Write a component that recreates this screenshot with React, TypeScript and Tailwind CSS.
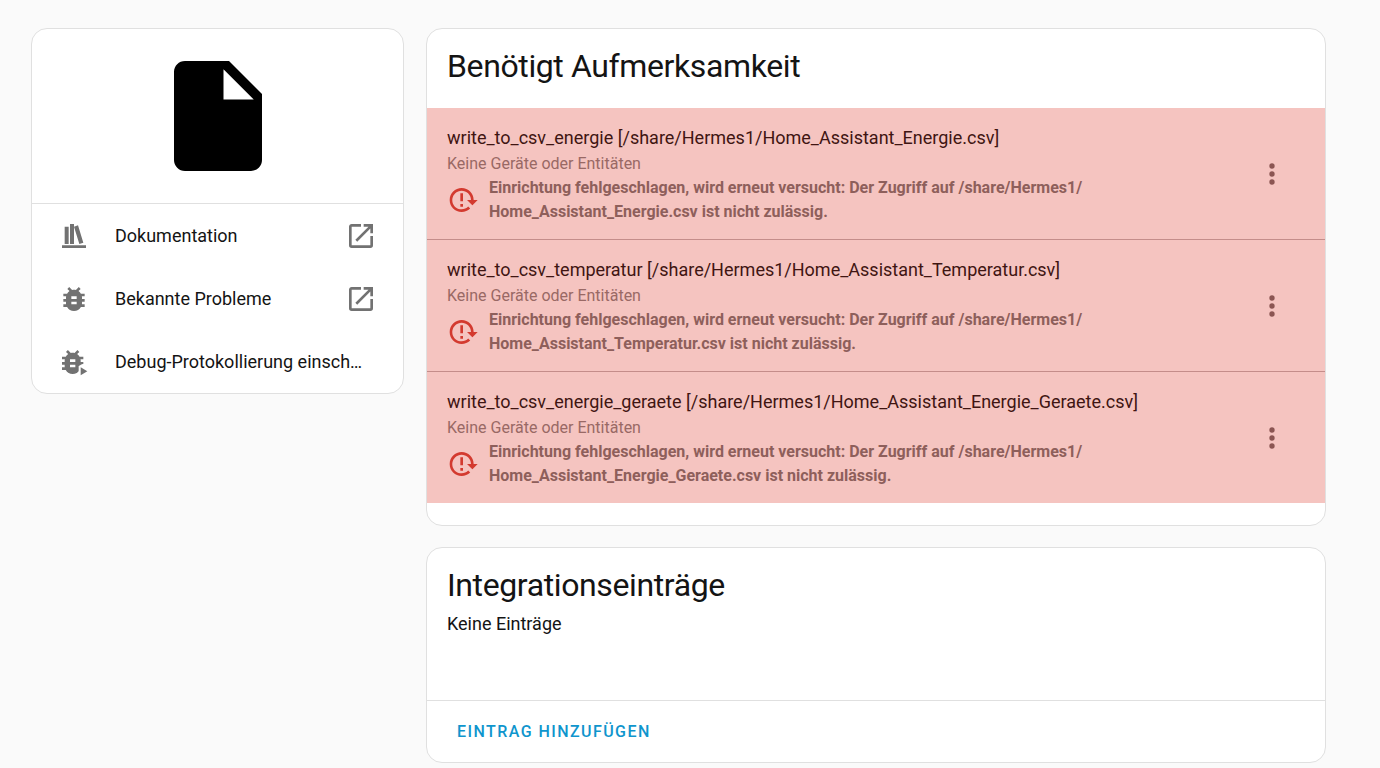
import { Fragment, type ReactNode } from 'react'

const mdiFile =
  'M13,9V3.5L18.5,9M6,2C4.89,2 4,2.89 4,4V20A2,2 0 0,0 6,22H18A2,2 0 0,0 20,20V8L14,2H6Z'
const mdiBookshelf =
  'M9 3V18H12V3H9M12 5L16 18L19 17L15 4L12 5M5 5V18H8V5H5M3 19V21H21V19H3Z'
const mdiBug =
  'M14,12H10V10H14M14,16H10V14H14M20,8H17.19C16.74,7.22 16.12,6.55 15.37,6.04L17,4.41L15.59,3L13.42,5.17C12.96,5.06 12.5,5 12,5C11.5,5 11.04,5.06 10.59,5.17L8.41,3L7,4.41L8.62,6.04C7.88,6.55 7.26,7.22 6.81,8H4V10H6.09C6.04,10.33 6,10.66 6,11V12H4V14H6V15C6,15.34 6.04,15.67 6.09,16H4V18H6.81C7.85,19.79 9.78,21 12,21C14.22,21 16.15,19.79 17.19,18H20V16H17.91C17.96,15.67 18,15.34 18,15V14H20V12H18V11C18,10.66 17.96,10.33 17.91,10H20V8Z'
const mdiOpenInNew =
  'M14,3V5H17.59L7.76,14.83L9.17,16.24L19,6.41V10H21V3M19,19H5V5H12V3H5C3.89,3 3,3.9 3,5V19A2,2 0 0,0 5,21H19A2,2 0 0,0 21,19V12H19V19Z'
const mdiReloadAlert =
  'M2 12C2 16.97 6.03 21 11 21C13.39 21 15.68 20.06 17.4 18.4L15.9 16.9C14.63 18.25 12.86 19 11 19C4.76 19 1.64 11.46 6.05 7.05C10.46 2.64 18 5.77 18 12H15L19 16H19.1L23 12H20C20 7.03 15.97 3 11 3C6.03 3 2 7.03 2 12M10 15H12V17H10V15M10 7H12V13H10V7'
const mdiDotsVertical =
  'M12,16A2,2 0 0,1 14,18A2,2 0 0,1 12,20A2,2 0 0,1 10,18A2,2 0 0,1 12,16M12,10A2,2 0 0,1 14,12A2,2 0 0,1 12,14A2,2 0 0,1 10,12A2,2 0 0,1 12,10M12,4A2,2 0 0,1 14,6A2,2 0 0,1 12,8A2,2 0 0,1 10,6A2,2 0 0,1 12,4Z'

const entries = [
  { title: 'write_to_csv_energie', path: '/share/Hermes1/Home_Assistant_Energie.csv' },
  { title: 'write_to_csv_temperatur', path: '/share/Hermes1/Home_Assistant_Temperatur.csv' },
  { title: 'write_to_csv_energie_geraete', path: '/share/Hermes1/Home_Assistant_Energie_Geraete.csv' },
]

function Icon({ path, className = 'size-8' }: { path: string; className?: string }) {
  return (
    <svg viewBox="0 0 24 24" fill="currentColor" aria-hidden="true" className={`shrink-0 ${className}`}>
      <path d={path} />
    </svg>
  )
}

function BugPlayIcon() {
  return (
    <svg viewBox="0 0 24 24" fill="currentColor" aria-hidden="true" className="size-8 shrink-0">
      <clipPath id="bug-body">
        <path d="M0 0H24V13.5H18.5L15.5 15V21.5H0Z" />
      </clipPath>
      <g clipPath="url(#bug-body)">
        <path d={mdiBug} transform="translate(-1 0)" />
      </g>
      <path d="M17 16V22L22 19Z" />
    </svg>
  )
}

function Card({ children }: { children: ReactNode }) {
  return (
    <section className="overflow-hidden rounded-2xl border border-[#e0e0e0] bg-white">{children}</section>
  )
}

function LinkRow({ icon, label }: { icon: string; label: string }) {
  return (
    <a href="#" className="flex h-[63px] items-center px-[26px]">
      <Icon path={icon} className="mr-[25px] size-8 text-[#727272]" />
      <span className="min-w-0 flex-1 truncate">{label}</span>
      <Icon path={mdiOpenInNew} className="size-8 text-[#727272]" />
    </a>
  )
}

// long paths may wrap after any slash
function BreakablePath({ path }: { path: string }) {
  return path.split('/').map((part, i) => (
    <Fragment key={i}>
      {i > 0 && '/'}
      {i > 1 && <wbr />}
      {part}
    </Fragment>
  ))
}

function EntryRow({ title, path }: { title: string; path: string }) {
  return (
    <li className="flex items-center border-b border-[#c48d8a] bg-[#f5c4c0] pt-4 pr-[21px] pb-[15px] pl-5 last:border-b-0">
      <div className="min-w-0 flex-1">
        <p className="text-[18px] leading-7 text-[#3f1512]">
          {title} [{path}]
        </p>
        <p className="text-[16px] leading-6 text-[#996965]">Keine Geräte oder Entitäten</p>
        <div className="flex items-center gap-[10px]">
          <Icon path={mdiReloadAlert} className="size-8 text-[#d33a2f]" />
          <p className="text-[16px] leading-6 font-bold text-[#8e5f5b]">
            Einrichtung fehlgeschlagen, wird erneut versucht: Der Zugriff auf <BreakablePath path={path} /> ist
            nicht zulässig.
          </p>
        </div>
      </div>
      <button type="button" aria-label="Menü" className="flex size-16 items-center justify-center text-[#8b5552]">
        <Icon path={mdiDotsVertical} />
      </button>
    </li>
  )
}

export default function App() {
  return (
    <div className="min-h-screen bg-[#fafafa] font-['Roboto',sans-serif] text-[18px] text-[#141414]">
      <main className="flex items-start gap-[22px] pt-7 pr-[54px] pl-[31px]">
        <div className="w-[373px] shrink-0">
          <Card>
            <div className="flex h-[175px] items-center justify-center border-b border-[#e0e0e0] text-black">
              <Icon path={mdiFile} className="size-[132px]" />
            </div>
            <nav>
              <LinkRow icon={mdiBookshelf} label="Dokumentation" />
              <LinkRow icon={mdiBug} label="Bekannte Probleme" />
              <button type="button" className="flex h-[63px] w-full items-center px-[26px] text-left">
                <span className="mr-[25px] text-[#727272]">
                  <BugPlayIcon />
                </span>
                <span className="min-w-0 flex-1 truncate">Debug-Protokollierung einsch…</span>
              </button>
            </nav>
          </Card>
        </div>

        <div className="flex min-w-0 flex-1 flex-col gap-[21px]">
          <Card>
            <h1 className="px-5 pt-[13px] pb-[18px] text-[32px] leading-[48px] tracking-[-0.012em]">
              Benötigt Aufmerksamkeit
            </h1>
            <ul className="pb-[22px]">
              {entries.map((entry) => (
                <EntryRow key={entry.title} {...entry} />
              ))}
            </ul>
          </Card>

          <Card>
            <h1 className="px-5 pt-[13px] text-[32px] leading-[48px] tracking-[-0.012em]">Integrationseinträge</h1>
            <p className="px-5 pb-[61px] leading-[30px]">Keine Einträge</p>
            <div className="border-t border-[#e0e0e0] px-5 py-[7px]">
              <button
                type="button"
                className="h-[47px] px-[10px] text-[16px] font-medium tracking-[0.09em] text-[#0f95cd] uppercase"
              >
                Eintrag hinzufügen
              </button>
            </div>
          </Card>
        </div>
      </main>
    </div>
  )
}
